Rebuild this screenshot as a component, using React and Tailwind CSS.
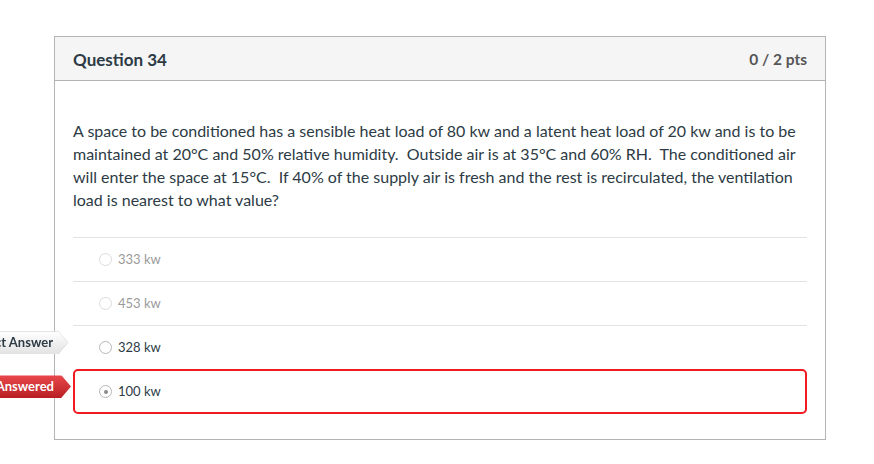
import React from 'react';

const answers = [
  { id: 'a', label: '333 kw', muted: true },
  { id: 'b', label: '453 kw', muted: true },
  { id: 'c', label: '328 kw', tag: 'correct' },
  { id: 'd', label: '100 kw', tag: 'answered', selected: true },
];

function Radio({ selected, muted }) {
  return (
    <span
      className={`flex h-[13px] w-[13px] shrink-0 items-center justify-center rounded-full border bg-white ${
        muted ? 'border-[#dcdcdc]' : 'border-[#b8b8b8]'
      }`}
    >
      {selected && <span className="h-[4px] w-[4px] rounded-full bg-[#8a8a8a]" />}
    </span>
  );
}

function Tag({ kind }) {
  if (kind === 'correct') {
    return (
      <div className="absolute left-[-128px] top-[calc(50%-5px)] -translate-y-1/2 [filter:drop-shadow(0_0_0.5px_#9a9a9a)]">
        <div className="flex h-[23px] w-[123px] items-center justify-end pr-[15px] text-[13px] font-bold text-[#2d3b45] bg-gradient-to-b from-[#ffffff] to-[#e2e2e2] [clip-path:polygon(0_0,92%_0,100%_50%,92%_100%,0_100%)]">
          Correct Answer
        </div>
      </div>
    );
  }
  return (
    <div className="absolute left-[-127px] top-[calc(50%-5px)] -translate-y-1/2">
      <div className="flex h-[23px] w-[123px] items-center justify-end pr-[17px] text-[13px] font-bold text-white bg-gradient-to-b from-[#e8474b] to-[#b71c22] [clip-path:polygon(0_0,92%_0,100%_50%,92%_100%,0_100%)]">
        Answered
      </div>
    </div>
  );
}

export default function App() {
  return (
    <div className="min-h-screen bg-white pt-[36px] pl-[54px] font-['Lato','Noto_Sans',sans-serif] text-[#2d3b45]">
      <div className="w-[772px] border border-[#b4b4b4]">
        <div className="flex h-[44px] items-center justify-between border-b border-[#b4b4b4] bg-[#f5f5f5] px-[18px] pt-[3px]">
          <h2 className="text-[17px] font-bold">Question 34</h2>
          <span className="text-[15.5px] font-bold text-[#555]">0 / 2 pts</span>
        </div>

        <div className="px-[18px] pt-[38px] pb-[25px]">
          <p className="text-[16px] leading-[23px]">
            A space to be conditioned has a sensible heat load of 80 kw and a latent heat load of 20 kw and is to be
            maintained at 20°C and 50% relative humidity.&nbsp; Outside air is at 35°C and 60% RH.&nbsp; The conditioned air
            will enter the space at 15°C.&nbsp; If 40% of the supply air is fresh and the rest is recirculated, the ventilation
            load is nearest to what value?
          </p>

          <div className="mt-[26px]">
            {answers.map((a) =>
              a.selected ? (
                <div
                  key={a.id}
                  className="relative flex h-[45px] items-center gap-[6px] rounded-[5px] border-2 border-[#f01a22] pl-[24px]"
                >
                  {a.tag && <Tag kind={a.tag} />}
                  <Radio selected />
                  <span className="text-[13px] text-[#2d3b45]">{a.label}</span>
                </div>
              ) : (
                <div
                  key={a.id}
                  className="relative flex h-[44px] items-center gap-[6px] border-t border-[#e4e4e4] pl-[26px]"
                >
                  {a.tag && <Tag kind={a.tag} />}
                  <Radio muted={a.muted} />
                  <span className={`text-[13px] ${a.muted ? 'text-[#9a9a9a]' : 'text-[#2d3b45]'}`}>{a.label}</span>
                </div>
              )
            )}
          </div>
        </div>
      </div>
    </div>
  );
}
